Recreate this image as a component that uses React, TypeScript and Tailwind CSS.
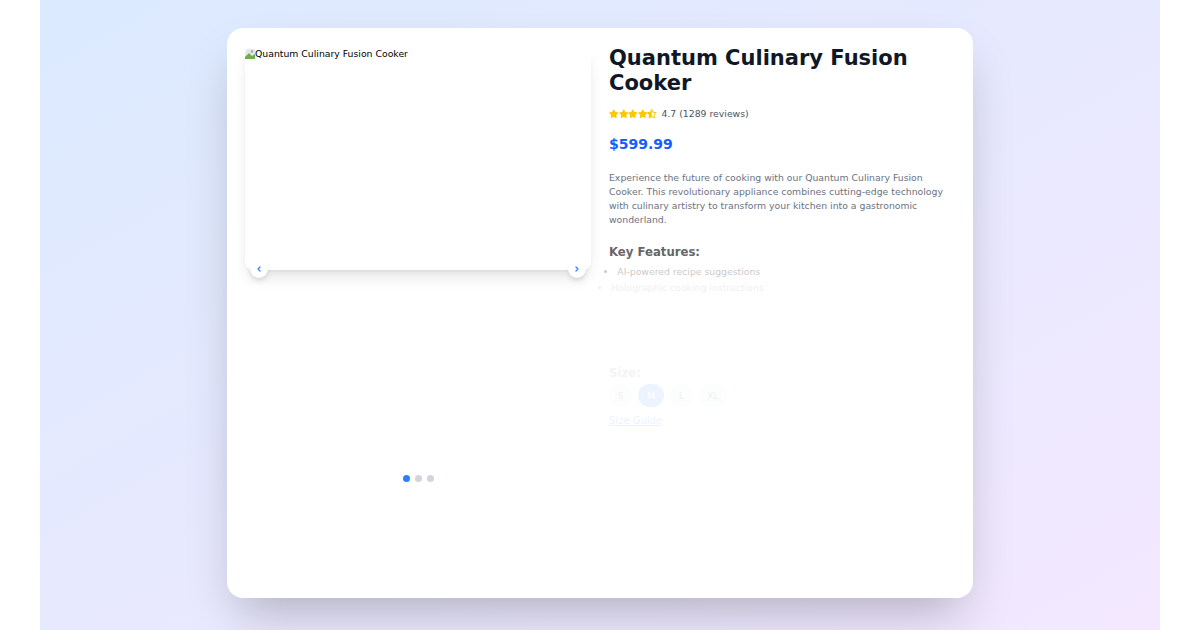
import React from "react";
import { FaStar, FaStarHalfAlt } from "react-icons/fa";

export default function App() {
  return (
    <div className="w-[1200px] h-[630px] bg-white px-10 font-['DejaVu_Sans',sans-serif]">
      <div className="h-full bg-linear-to-br from-blue-100 to-purple-100 flex justify-center pt-7">
        <div className="w-[746px] h-[570px] bg-white rounded-2xl shadow-2xl p-[18px] grid grid-cols-2 gap-[18px] content-start">
          {/* Left: carousel */}
          <div className="relative h-[446px]">
            <div className="h-[224px] bg-white rounded-lg shadow-lg overflow-hidden">
              <div className="flex items-center h-[14px] mt-[1px] text-[9.3px] leading-[14px] text-black">
                <svg width="10" height="12" viewBox="0 0 10 12" className="shrink-0">
                  <rect x="0" y="1" width="10" height="10" rx="1" fill="#e5e7eb" />
                  <path d="M0 9 L4 5 L7 8 L10 6 L10 11 L0 11 Z" fill="#6bb04a" />
                  <circle cx="7" cy="3.5" r="1.2" fill="#9ca3af" />
                </svg>
                <span>Quantum Culinary Fusion Cooker</span>
              </div>
            </div>
            <button className="absolute left-[5px] top-1/2 -translate-y-1/2 w-[18px] h-[18px] rounded-full bg-white shadow-md flex items-center justify-center">
              <svg width="8" height="8" viewBox="0 0 24 24" fill="none" stroke="#3b82f6" strokeWidth="4" strokeLinecap="round" strokeLinejoin="round">
                <path d="M15 18l-6-6 6-6" />
              </svg>
            </button>
            <button className="absolute right-[5px] top-1/2 -translate-y-1/2 w-[18px] h-[18px] rounded-full bg-white shadow-md flex items-center justify-center">
              <svg width="8" height="8" viewBox="0 0 24 24" fill="none" stroke="#3b82f6" strokeWidth="4" strokeLinecap="round" strokeLinejoin="round">
                <path d="M9 18l6-6-6-6" />
              </svg>
            </button>
            <div className="absolute bottom-[10px] left-0 right-0 flex justify-center gap-[5px]">
              <span className="w-[7px] h-[7px] rounded-full bg-blue-500" />
              <span className="w-[7px] h-[7px] rounded-full bg-gray-300" />
              <span className="w-[7px] h-[7px] rounded-full bg-gray-300" />
            </div>
          </div>

          {/* Right: details */}
          <div className="flex flex-col">
            <h1 className="text-[21px] leading-[25px] font-bold text-gray-900">
              Quantum Culinary Fusion Cooker
            </h1>
            <div className="mt-[11px] h-[14px] flex items-center">
              <div className="flex text-yellow-400 text-[9.5px]">
                <FaStar />
                <FaStar />
                <FaStar />
                <FaStar />
                <FaStarHalfAlt />
              </div>
              <span className="ml-[5px] text-[9.3px] text-gray-600">4.7 (1289 reviews)</span>
            </div>
            <div className="mt-[13px] h-[20px] leading-[20px] text-[14px] font-bold text-blue-600">$599.99</div>
            <p className="mt-[17px] text-[9.3px] leading-[14px] text-gray-500">
              Experience the future of cooking with our Quantum Culinary Fusion Cooker. This revolutionary appliance combines cutting-edge technology with culinary artistry to transform your kitchen into a gastronomic wonderland.
            </p>
            <h2 className="mt-[16px] text-[11.7px] leading-[18px] font-bold text-[#666]">Key Features:</h2>
            <ul className="mt-[3px] list-disc list-inside text-[9.3px] leading-[16px] text-[#666]">
              <li className="-translate-x-[5px] opacity-35">AI-powered recipe suggestions</li>
              <li className="-translate-x-[11px] opacity-10">Holographic cooking instructions</li>
              <li className="opacity-0">Molecular gastronomy toolkit</li>
              <li className="opacity-0">Voice-controlled operation</li>
              <li className="opacity-0">Self-cleaning nano-surface</li>
            </ul>
            <h3 className="mt-[20px] text-[11.7px] leading-[18px] font-bold text-[#666] opacity-[0.07]">Size:</h3>
            <div className="mt-[2px] flex gap-[6px] opacity-[0.08]">
              <button className="w-[23px] h-[23px] rounded-full bg-gray-200 text-[9.3px] text-gray-700">S</button>
              <button className="w-[26px] h-[23px] rounded-full bg-blue-500 text-[9.3px] text-white">M</button>
              <button className="w-[23px] h-[23px] rounded-full bg-gray-200 text-[9.3px] text-gray-700">L</button>
              <button className="w-[28px] h-[23px] rounded-full bg-gray-200 text-[9.3px] text-gray-700">XL</button>
            </div>
            <a className="mt-[7px] text-[10px] leading-[14px] text-blue-600 underline opacity-[0.08]">Size Guide</a>
          </div>
        </div>
      </div>
    </div>
  );
}
